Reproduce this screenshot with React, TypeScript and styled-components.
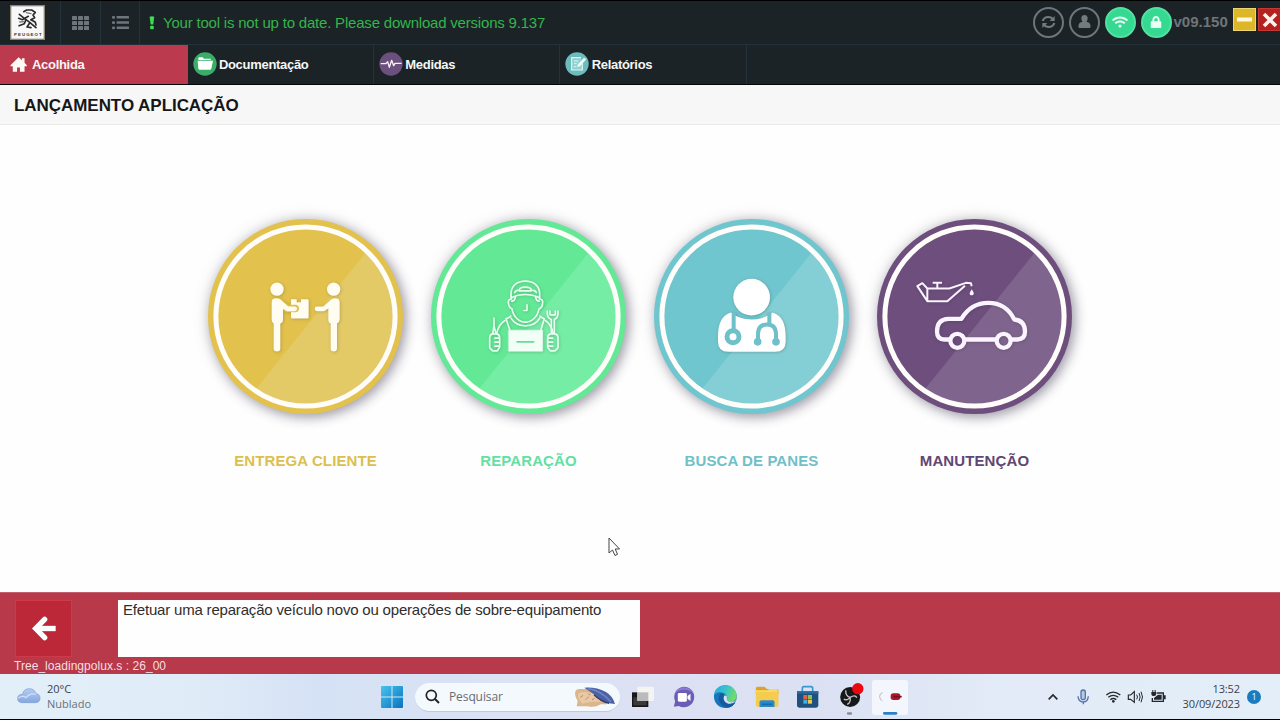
import React from "react";
import styled, { createGlobalStyle } from "styled-components";
import { FaWifi, FaLock } from "react-icons/fa";

const sans = `"Liberation Sans", Arial, sans-serif`;
const system = `"Open Sans", "Noto Sans", sans-serif`;

const GlobalStyle = createGlobalStyle`
  * { box-sizing: border-box; }
  html, body { margin: 0; padding: 0; background: #fefefe; }
  body { overflow: hidden; font-family: ${sans}; }
  svg { display: block; flex: none; }
`;

const Screen = styled.div`
  position: relative;
  display: flex;
  flex-direction: column;
  width: 1280px;
  height: 720px;
  background: #fefefe;
  white-space: nowrap;
`;

/* ---------- header ---------- */

const TopBar = styled.header`
  display: flex;
  align-items: stretch;
  height: 45px;
  background: #1b2326;
  border-top: 1px solid #000;
  border-bottom: 1px solid #22323a;
`;

const TopCell = styled.div<{ $width: number }>`
  display: flex;
  align-items: center;
  justify-content: center;
  width: ${(p) => p.$width}px;
  border-right: 1px solid #22323a;
`;

const LogoSlot = styled.div`
  display: flex;
  margin-right: 6px;
`;

const Notice = styled.div`
  display: flex;
  align-items: center;
  flex: 1;
  padding: 0 0 0 9px;
  gap: 8px;
  color: #33b54c;
  font-size: 15px;
  letter-spacing: -0.2px;
`;

const StatusGroup = styled.div`
  display: flex;
  align-items: flex-start;
  padding-top: 5.5px;
  gap: 4.7px;
`;

const StatusDot = styled.div<{ $active?: boolean }>`
  display: flex;
  align-items: center;
  justify-content: center;
  width: 31px;
  height: 31px;
  border-radius: 50%;
  border: 2px solid ${(p) => (p.$active ? "#4fe3a2" : "#6f757a")};
  background: ${(p) => (p.$active ? "#35d992" : "transparent")};
  color: ${(p) => (p.$active ? "#e9fff5" : "#747a80")};
`;

const Version = styled.div`
  margin: 12px 5px 0 2px;
  width: 54.5px;
  color: #6f757a;
  font-size: 15px;
  line-height: 17px;
  font-weight: bold;
`;

const WindowButton = styled.button<{ $color: string; $edge: string }>`
  display: flex;
  align-items: center;
  justify-content: center;
  width: 23px;
  height: 23px;
  margin: 7px 2px 0 0;
  padding: 0;
  border: 1px solid ${(p) => p.$edge};
  background: ${(p) => p.$color};
  &:last-child { margin-right: -1px; }
`;

const Tabs = styled.nav`
  display: flex;
  height: 40px;
  background: #1b2326;
  border-bottom: 1px solid #050708;
`;

const Tab = styled.a<{ $active?: boolean }>`
  display: flex;
  align-items: center;
  width: ${(p) => (p.$active ? 187.5 : 186.4)}px;
  padding: 0 0 1px ${(p) => (p.$active ? 10 : 5)}px;
  gap: ${(p) => (p.$active ? 5 : 2.4)}px;
  border-right: 1px solid ${(p) => (p.$active ? "#bb3a4d" : "#22323a")};
  background: ${(p) => (p.$active ? "#bb3a4d" : "transparent")};
  color: #f6f6f6;
  font-size: 13px;
  font-weight: bold;
  letter-spacing: -0.3px;
`;

const TitleBar = styled.h1`
  display: flex;
  align-items: center;
  height: 40px;
  margin: 0;
  padding: 2px 0 0 14px;
  background: #f7f7f7;
  border-bottom: 1px solid #e9e9e9;
  color: #161616;
  font-size: 17px;
  font-weight: bold;
  letter-spacing: -0.05px;
`;

/* ---------- main choices ---------- */

const Main = styled.main`
  display: flex;
  justify-content: center;
  gap: 28px;
  flex: 1;
  padding-top: 94px;
`;

const Choice = styled.div<{ $color: string }>`
  display: flex;
  flex-direction: column;
  align-items: center;
  width: 195px;
  gap: 38px;
  color: ${(p) => p.$color};
  font-size: 15px;
  line-height: 18px;
  font-weight: bold;
  letter-spacing: 0.1px;
`;

const Disc = styled.div<{ $color: string }>`
  width: 195px;
  height: 195px;
  border-radius: 50%;
  background: ${(p) => p.$color};
  box-shadow: 3px 3px 12px rgba(50, 40, 70, 0.4), 0 0 16px rgba(90, 90, 100, 0.2);
`;

const Glyph = styled.svg`
  overflow: visible;
  filter: drop-shadow(2px 2px 5px rgba(40, 40, 40, 0.25));
`;

/* ---------- footer ---------- */

const Footer = styled.footer`
  display: grid;
  grid-template-columns: 104px 1fr;
  grid-template-rows: 57px 1fr;
  height: 82px;
  padding: 7px 0 0 14px;
  background: #b83949;
  border-top: 1px solid #c4606d;
`;

const BackButton = styled.button`
  display: flex;
  align-items: center;
  justify-content: center;
  width: 57px;
  height: 57px;
  padding: 0;
  margin-left: 1px;
  border: 1px solid #cf3a48;
  background: #bd2838;
`;

const Message = styled.div`
  width: 522px;
  height: 57px;
  padding: 1px 5px;
  background: #fffefe;
  color: #2e2e2e;
  font-size: 15px;
  line-height: 18px;
  letter-spacing: -0.19px;
`;

const ScriptName = styled.div`
  grid-column: 1 / 3;
  padding-top: 2px;
  color: #f6dfe1;
  font-size: 12px;
  line-height: 15px;
  letter-spacing: 0.04px;
`;

/* ---------- taskbar ---------- */

const Taskbar = styled.div`
  display: flex;
  align-items: center;
  height: 46px;
  background: linear-gradient(90deg, #e3eff8 0, #dfebf7 200px, #d5e2f5 320px, #dbe2f4 520px, #dbe1f3 820px, #e2ebf7 1000px, #e3eef8 100%);
  border-bottom: 1px solid #000;
  font-family: ${system};
  color: #3b4148;
`;

const Weather = styled.div`
  display: flex;
  align-items: center;
  gap: 6px;
  width: 380.5px;
  padding: 0 0 2px 17px;
  font-size: 11px;
  line-height: 15px;
`;

const Muted = styled.div`
  color: #6a7179;
`;

const SearchBox = styled.div`
  display: flex;
  align-items: center;
  width: 204.5px;
  height: 29px;
  margin: 1px 1.5px 0 12.5px;
  padding: 0 4px 0 10px;
  border-radius: 15px;
  background: #f4f9fd;
  border-bottom: 1px solid #c3c9d6;
  font-size: 12px;
  letter-spacing: -0.1px;
  color: #666c73;
  gap: 9px;
`;

const SearchText = styled.span`
  flex: 1;
`;

const Tray = styled.div`
  display: flex;
  align-items: center;
  margin-left: auto;
  padding-right: 19px;
`;

const Clock = styled.div`
  width: 72px;
  padding: 0 1px 1px 0;
  margin-right: 6px;
  text-align: right;
  font-size: 11px;
  line-height: 15px;
  letter-spacing: -0.1px;
`;

const Count = styled.div`
  width: 14px;
  height: 14px;
  border-radius: 50%;
  background: #1a7cc0;
  color: #fff;
  font-size: 9px;
  line-height: 14px;
  text-align: center;
`;

const Pointer = styled.svg`
  position: absolute;
  left: 608px;
  top: 537px;
`;

/* ---------- drawings ---------- */

const Logo = () => (
  <svg width="35" height="35" viewBox="29 14 105 105">
    <rect x="31" y="16" width="101" height="101" fill="#f8f8f8" stroke="#8a8474" strokeWidth="4" />
    <g fill="none" stroke="#2b2b2b" strokeWidth="5" strokeLinecap="round" strokeLinejoin="round">
      <path d="M70 34 L79 29 L94 29 L105 36 L98 44 L103 52 L92 58" />
      <path d="M57 42 L72 54 L88 66 L107 82" />
      <path d="M84 48 L66 58 L55 54 M92 58 L105 66 L107 74 M76 60 L72 70 L56 76 M88 68 L80 80 L92 82" />
      <path d="M78 37 L92 40 M58 65 L70 64" strokeWidth="4" stroke="#777" />
    </g>
    <text x="41" y="107" fontFamily="Liberation Sans, sans-serif" fontSize="13" fontWeight="bold" fill="#333" textLength="83">
      PEUGEOT
    </text>
  </svg>
);

const GridIcon = () => (
  <svg width="17" height="14" viewBox="0 0 17 14" fill="#6e757b">
    {[0, 5, 10].map((y) => [0, 6, 12].map((x) => <rect key={`${x}-${y}`} x={x} y={y} width="5" height="4" rx=".6" />))}
  </svg>
);

const ListIcon = () => (
  <svg width="17" height="14" viewBox="0 0 17 14" fill="#6e757b">
    {[0, 5.2, 10.4].map((y) => (
      <g key={y}>
        <rect y={y} width="3" height="2.8" rx="1" />
        <rect x="4.6" y={y} width="12.4" height="2.6" rx=".4" />
      </g>
    ))}
  </svg>
);

const AlertMark = () => (
  <svg width="6" height="14" viewBox="0 0 6 14" fill="#3edb55">
    <path d="M.6.8Q3-.4 5.2.8L4.3 8.4H1.7Z" />
    <rect x="1.1" y="9.8" width="3.7" height="3.4" rx="1" />
  </svg>
);

const HomeIcon = () => (
  <svg width="17" height="15" viewBox="29 168 51 46" fill="#fffaf5">
    <path d="M55 169 L65 178 V172 H73 V186 L80 193 V196 H73 V213 H59 V200 H50 V213 H37 V196 H30 V193Z" />
  </svg>
);

const SyncIcon = () => (
  <svg width="15" height="14" viewBox="0 0 45 42" fill="none" stroke="currentColor" strokeWidth="6.5">
    <path d="M5 18 Q9 6 22 6 Q30 6 36 12 M40 24 Q36 36 23 36 Q15 36 9 30" />
    <path d="M41 3 V18 H26Z M4 39 V24 H19Z" fill="currentColor" stroke="none" />
  </svg>
);

const PersonIcon = () => (
  <svg width="13" height="14" viewBox="0 0 13 14" fill="currentColor">
    <path d="M6.5 0C8.6 0 9.8 1.5 9.7 3.6C9.6 5.2 8.9 6.3 8.4 6.8C10.8 7 12.6 8.4 12.6 11.4Q12.6 13 11.2 13H1.8Q.4 13 .4 11.4C.4 8.4 2.2 7 4.6 6.8C4.1 6.3 3.4 5.2 3.3 3.6C3.2 1.5 4.4 0 6.5 0Z" />
  </svg>
);

const FolderTabIcon = () => (
  <svg width="24" height="24" viewBox="0 0 72 72">
    <circle cx="36" cy="36" r="35" fill="#3aae68" />
    <path d="M16 19 Q16 16 19 16 H29 L33 20 H53 V24 H16Z M14 26 H60 L55 50 Q54 53 51 53 H20 Q17 53 16 50Z" fill="#fff" />
  </svg>
);

const PulseTabIcon = () => (
  <svg width="24" height="24" viewBox="0 0 72 72">
    <circle cx="36" cy="36" r="35" fill="#6b4f7c" />
    <path d="M5 35 H20 L26 29 L31 46 L38 25 L44 41 L48 34 H68" fill="none" stroke="#f6effa" strokeWidth="4" strokeLinejoin="round" />
  </svg>
);

const NoteTabIcon = () => (
  <svg width="24" height="24" viewBox="0 0 72 72">
    <circle cx="36" cy="36" r="35" fill="#6cbcbd" />
    <path d="M48 17 H20 V54 H52 V34" fill="#8fd0d1" stroke="#dff6f5" strokeWidth="3.5" />
    <path d="M27 27 H40 M27 35 H35 M27 44 H34" stroke="#dff6f5" strokeWidth="3" />
    <path d="M36 46 L39 37 L57 17 L64 22 L45 43Z" fill="#e9fbfa" />
  </svg>
);

const Handover = () => (
  <g fill="#fffdf2">
    <circle cx="246" cy="254" r="20" />
    <circle cx="416" cy="254" r="20" />
    <path d="M288 284 H305 V293 H318 V284 H337 Q341 284 341 288 V338 Q341 342 337 342 H292 Q288 342 288 338Z" />
    <path d="M252 292 L276 312 H301" fill="none" stroke="#e2c04a" strokeWidth="22" strokeLinecap="round" />
    <path d="M230 293 Q230 281 243 281 Q256 281 263 291 L280 306 H299 Q306 306 306 313 Q306 320 299 320 H276 L264 313 V345 Q264 355 256 357 V432 Q256 441 246 441 Q236 441 236 432 V357 Q230 354 230 345Z" />
    <path d="M434 293 Q434 281 421 281 Q409 281 402 291 L385 306 H366 Q359 306 359 313 Q359 320 366 320 H387 L400 312 V345 Q400 355 407 357 V432 Q407 441 416 441 Q426 441 426 432 V357 Q434 354 434 345Z" />
  </g>
);

const Mechanic = () => (
  <g fill="none" stroke="#e6fff0" strokeWidth="5" strokeLinecap="round" strokeLinejoin="round">
    <path d="M273 280 V268 C273 245 290 230 316 230 C342 230 359 245 359 268 V280 Q338 270 316 270 Q294 270 273 280Z" />
    <path d="M284 264 Q287 257 298 257 Q299 248 316 248 Q333 248 334 257 Q346 257 349 264" />
    <path d="M298 259 H334" />
    <path d="M275 283 Q264 284 265 295 Q267 310 276 313 C280 337 298 353 316 353 C335 353 353 337 357 313 Q367 310 368 295 Q369 284 358 283 M275 290 Q283 291 286 279 M358 290 Q350 291 347 279" />
    <path d="M321 301 V318 H312" />
    <path d="M258 343 L270 378 M258 343 Q266 341 272 335 M373 343 L362 378 M373 343 Q366 341 360 335 M273 341 Q287 364 316 364 Q346 364 359 341" />
    <path d="M255 348 Q236 359 230 387 M376 348 Q392 358 400 387" />
    <path d="M266 377 H368 V440 H266Z" fill="#f1fff6" strokeWidth="2" />
    <path d="M291 412 H341" stroke="#66dd94" />
    <path d="M222 341 V364 M218 388 L222 364 L228 388 M209 401 Q209 388 220 388 H228 Q239 388 239 401 V428 L232 439 H218 L209 430Z M225 401 H236 M225 413 H236 M225 425 H236" />
    <path d="M382 320 V329 Q383 341 394 345 V387 M414 320 V329 Q413 341 403 345 V387 M390 320 V331 H406 V320 M383 401 Q383 388 394 388 H403 Q414 388 414 401 V430 L405 439 H391 L383 428Z M386 401 H398 M386 413 H398 M386 425 H398" />
  </g>
);

const Doctor = () => (
  <g fill="#fff">
    <path d="M267 324 Q293 345 329 345 Q366 345 391 324 C419 332 431 356 431 397 V411 Q431 442 400 442 H259 Q228 442 228 411 V397 C228 356 240 332 267 324Z" />
    <circle cx="329" cy="278" r="55" />
    <g fill="none" stroke="#6fc0c9" strokeWidth="12">
      <path d="M275 324 V378 M382 324 V358" />
      <circle cx="273" cy="397" r="18" strokeWidth="15" />
      <path d="M348 409 V387 Q349 360 375 360 Q401 360 402 387 V409" />
    </g>
    <g fill="#6fc0c9">
      <circle cx="347" cy="412" r="11.5" />
      <circle cx="402" cy="412" r="11.5" />
    </g>
  </g>
);

const CarService = () => (
  <g fill="none" stroke="#fbf3ff">
    <g strokeWidth="13">
      <path d="M252 405 H238 Q216 405 216 381 C216 355 228 344 250 343 H289 C307 313 335 295 370 295 C408 295 434 317 448 345 C470 347 480 360 480 382 Q480 404 458 405 H440 M300 405 H394" strokeLinejoin="round" />
      <circle cx="277" cy="409" r="21" />
      <circle cx="416" cy="409" r="21" />
    </g>
    <g strokeWidth="6" strokeLinejoin="round">
      <path d="M187 252 L172 236 L157 245 L187 290 H247 L300 244 M187 290 V252 H253 L303 235 L318 236 L320 245 M203 235 H231 M217 235 V250" />
    </g>
    <path d="M320 254 Q328 265 326 269 Q320 276 314 269 Q313 265 320 254Z" fill="#fbf3ff" stroke="none" />
  </g>
);

type ChoiceData = {
  id: string;
  label: string;
  color: string;
  tint: string;
  text: string;
  originX: number;
  art: React.ReactNode;
};

const choices: ChoiceData[] = [
  { id: "delivery", label: "ENTREGA CLIENTE", color: "#e2c14c", tint: "#e4ca66", text: "#dcbf4e", originX: 39, art: <Handover /> },
  { id: "repair", label: "REPARAÇÃO", color: "#63e996", tint: "#75eda5", text: "#66dfa2", originX: 33, art: <Mechanic /> },
  { id: "diagnosis", label: "BUSCA DE PANES", color: "#70c6ce", tint: "#84cfd5", text: "#70c0c8", originX: 36, art: <Doctor /> },
  { id: "service", label: "MANUTENÇÃO", color: "#6d4e7d", tint: "#7f648d", text: "#614673", originX: 36, art: <CarService /> },
];

const ChoiceItem = ({ item }: { item: ChoiceData }) => (
  <Choice $color={item.text}>
    <Disc $color={item.color}>
      <svg width="195" height="195" viewBox="0 0 195 195">
        <clipPath id={`clip-${item.id}`}>
          <circle cx="97.5" cy="97.5" r="90" />
        </clipPath>
        <path d="M167 22 L40 180 L195 195 V22Z" fill={item.tint} clipPath={`url(#clip-${item.id})`} />
        <circle cx="97.5" cy="97.5" r="89.6" fill="none" stroke="#fffdfa" strokeWidth="5" />
        <Glyph width="195" height="195" viewBox={`${item.originX} 43.5 585 585`}>
          {item.art}
        </Glyph>
      </svg>
    </Disc>
    {item.label}
  </Choice>
);

const CloudIcon = () => (
  <svg width="24" height="16" viewBox="52 306 72 48">
    <defs>
      <linearGradient id="cloud" x1="0" y1="0" x2="0" y2="1">
        <stop offset="0" stopColor="#b4cdf3" />
        <stop offset="1" stopColor="#86a6dc" />
      </linearGradient>
    </defs>
    <path d="M69 350 Q54 350 54 338 Q54 325 68 325 Q72 308 89 308 Q105 308 108 323 Q121 323 121 337 Q121 350 107 350Z" fill="url(#cloud)" stroke="#7d9dd6" strokeWidth="2" />
    <path d="M56 336 Q68 327 79 335 Q92 320 108 325" fill="none" stroke="#cfe0fa" strokeWidth="4" />
  </svg>
);

const StartIcon = () => (
  <svg width="22" height="22" viewBox="0 0 22 22">
    <defs>
      <linearGradient id="win" x1="0" y1="0" x2="1" y2="1">
        <stop offset="0" stopColor="#45c4ee" />
        <stop offset="1" stopColor="#0b72bd" />
      </linearGradient>
    </defs>
    <path d="M1 0H10.5V10.5H0V1Q0 0 1 0ZM11.5 0H21Q22 0 22 1V10.5H11.5ZM0 11.5H10.5V22H1Q0 22 0 21ZM11.5 11.5H22V21Q22 22 21 22H11.5Z" fill="url(#win)" />
  </svg>
);

const MagnifierIcon = () => (
  <svg width="15" height="15" viewBox="0 0 15 15" fill="none" stroke="#202225" strokeWidth="1.7">
    <circle cx="6.3" cy="6.3" r="5" />
    <path d="M10 10L14 14" strokeWidth="2" />
  </svg>
);

const BreadIcon = () => (
  <svg width="42" height="22" viewBox="637 46 126 66">
    <path d="M641 62 Q645 53 658 55 L702 56 Q721 61 729 76 L735 101 L717 101 Q700 112 678 107 L645 107 L648 91 Q638 76 641 62Z" fill="#dcb58b" />
    <path d="M650 68 Q672 58 699 72 Q717 80 714 94 Q690 91 662 99 Q645 84 650 68Z" fill="#e9c9a5" />
    <path d="M656 80 L664 74 M672 87 L681 78 M691 88 L699 82 M680 70 L686 73" stroke="#b98a5e" strokeWidth="3" />
    <path d="M668 51 Q702 48 733 64 Q754 77 760 100 L742 98 Q716 91 697 71Z" fill="#4a62a5" />
    <path d="M678 54 Q715 58 748 93" stroke="#6a82c2" strokeWidth="5" fill="none" />
    <path d="M697 72 Q716 91 742 98" stroke="#2d3c68" strokeWidth="4" fill="none" />
  </svg>
);

const TaskViewArt = () => (
  <>
    <rect x="36" y="67" width="49" height="44" fill="#181818" />
    <rect x="40" y="82" width="40" height="24" fill="#3a3a3a" />
    <rect x="52" y="50" width="50" height="43" rx="3" fill="#f4f4f3" />
    <path d="M52 67 H85 V93 H52Z" fill="#bbb" />
  </>
);

const ChatArt = () => (
  <>
    <path d="M190 50 A31 31 0 1 1 175 108 L160 110 L164 94 A31 31 0 0 1 190 50Z" fill="#6a5cb8" />
    <path d="M162 72 A31 31 0 0 1 220 72 A40 40 0 0 0 162 72Z" fill="#8a7bd0" />
    <rect x="172" y="69" width="27" height="26" rx="4" fill="#fff" />
    <path d="M201 78 L210 71 V93 L201 86Z" fill="#fff" />
  </>
);

const EdgeArt = () => (
  <>
    <defs>
      <linearGradient id="edgeTop" x1="0" y1="0" x2="1" y2=".3">
        <stop offset="0" stopColor="#2ba9df" />
        <stop offset=".55" stopColor="#38c3cc" />
        <stop offset="1" stopColor="#70db6b" />
      </linearGradient>
    </defs>
    <circle cx="316" cy="80" r="34" fill="#1874bd" />
    <path d="M282 76 C283 57 298 46 316 46 C336 46 350 61 350 77 C350 92 338 99 326 96 C314 94 324 88 321 80 C315 65 291 62 282 76Z" fill="url(#edgeTop)" />
    <path d="M300 72 C291 91 302 110 322 113 C333 112 341 106 346 98 C334 104 319 103 312 94 C308 87 309 80 314 76 C311 71 306 69 300 72Z" fill="#135a9f" />
    <path d="M314 76 C307 86 314 99 326 101 C337 102 347 96 350 87 C348 94 335 99 326 95 C318 92 322 85 320 79Z" fill="#d9e2f3" />
  </>
);

const FolderArt = () => (
  <>
    <path d="M406 55 Q406 50 411 50 H432 L439 57 H469 Q474 57 474 62 V73 H406Z" fill="#dba22e" />
    <rect x="406" y="60" width="68" height="50" rx="4" fill="#f6cc4f" />
    <path d="M406 62 H440 L446 57 H470 V66 H406Z" fill="#f9d768" />
    <path d="M417 111 V97 Q417 91 423 91 H456 Q462 91 462 97 V111Z" fill="#2c89c9" />
    <path d="M424 103 H455" stroke="#1769a7" strokeWidth="5" />
  </>
);

const StoreArt = () => (
  <>
    <path d="M547 65 V55 Q547 50 552 50 H573 Q578 50 578 55 V65" fill="none" stroke="#3898d0" strokeWidth="5" />
    <path d="M531 64 H595 V106 Q595 113 588 113 H538 Q531 113 531 106Z" fill="#20517e" />
    <path d="M531 64 H595 V71 H531Z" fill="#286b9e" />
    <rect x="550" y="75" width="12" height="12" fill="#ea6045" />
    <rect x="564" y="75" width="12" height="12" fill="#8cc44f" />
    <rect x="550" y="89" width="12" height="12" fill="#43aee8" />
    <rect x="564" y="89" width="12" height="12" fill="#f2c64b" />
  </>
);

const RecorderArt = () => (
  <>
    <circle cx="689" cy="81" r="30" fill="#17181a" />
    <path d="M676 61 Q674 78 689 82 Q704 73 709 83 M689 82 Q691 99 680 103 M670 87 Q678 94 689 82" fill="none" stroke="#c9c9c9" strokeWidth="4" />
    <circle cx="712" cy="56" r="17" fill="#e90710" />
    <rect x="679" y="127" width="16" height="7" rx="3.5" fill="#888d95" />
  </>
);

const ActiveArt = () => (
  <>
    <rect x="756" y="30" width="108" height="105" rx="9" fill="#f3f6fc" />
    <path d="M788 68 Q778 70 779 80 Q780 91 787 92" fill="none" stroke="#b9bdc0" strokeWidth="3" />
    <rect x="812" y="70" width="29" height="20" rx="8" fill="#a81828" />
    <path d="M820 80 H845" stroke="#7a0d1b" strokeWidth="5" />
    <rect x="789" y="126" width="43" height="8" rx="4" fill="#2c7fc4" />
  </>
);

const taskArt = [TaskViewArt, ChatArt, EdgeArt, FolderArt, StoreArt, RecorderArt, ActiveArt];

const TrayIcons = () => (
  <svg width="124" height="45" viewBox="45 12 372 135" fill="none" stroke="#24282c" strokeWidth="4">
    <path d="M56 88 L69 75 L82 88" strokeWidth="5" />
    <g stroke="#5474ad">
      <rect x="153" y="60" width="13" height="29" rx="6.5" fill="#b7c9e6" />
      <path d="M144 79 Q145 96 160 96 Q174 96 175 79 M160 96 V103" />
    </g>
    <path d="M229 75 Q249 58 271 75 M235 82 Q249 70 265 82 M241 89 Q249 82 259 89" />
    <circle cx="250" cy="94" r="4" fill="#24282c" stroke="none" />
    <path d="M295 75 H302 L313 65 V97 L302 88 H295Z" strokeWidth="3.5" />
    <path d="M320 74 Q325 81 320 88 M327 69 Q334 81 327 93 M333 65 Q342 81 333 97" strokeWidth="3" />
    <path d="M381 69 H400 V94 H367 V84" />
    <path d="M372 84 L384 74 H395 V89 H372Z M402 76 H407 V88 H402Z" fill="#24282c" stroke="none" />
    <path d="M364 66 H379 V71 Q379 78 372 78 Q364 78 364 71Z M367 60 H370 V67 H367Z M374 60 H377 V67 H374Z" fill="#24282c" stroke="none" />
  </svg>
);

export default function App() {
  return (
    <Screen>
      <GlobalStyle />
      <TopBar>
        <TopCell $width={61}>
          <LogoSlot>
            <Logo />
          </LogoSlot>
        </TopCell>
        <TopCell $width={40}>
          <GridIcon />
        </TopCell>
        <TopCell $width={39}>
          <ListIcon />
        </TopCell>
        <Notice>
          <AlertMark />
          Your tool is not up to date. Please download versions 9.137
        </Notice>
        <StatusGroup>
          <StatusDot><SyncIcon /></StatusDot>
          <StatusDot><PersonIcon /></StatusDot>
          <StatusDot $active><FaWifi size={16} /></StatusDot>
          <StatusDot $active><FaLock size={12} /></StatusDot>
        </StatusGroup>
        <Version>v09.150</Version>
        <WindowButton $color="#ddb629" $edge="#ecd774">
          <svg width="15" height="5" viewBox="0 0 15 5"><rect y=".5" width="15" height="4" fill="#fff8dc" /></svg>
        </WindowButton>
        <WindowButton $color="#b5211f" $edge="#c53732">
          <svg width="16" height="16" viewBox="0 0 16 16"><path d="M2 2L14 14M14 2L2 14" stroke="#fff2ea" strokeWidth="3.6" /></svg>
        </WindowButton>
      </TopBar>
      <Tabs>
        <Tab $active><HomeIcon />Acolhida</Tab>
        <Tab><FolderTabIcon />Documentação</Tab>
        <Tab><PulseTabIcon />Medidas</Tab>
        <Tab><NoteTabIcon />Relatórios</Tab>
      </Tabs>
      <TitleBar>LANÇAMENTO APLICAÇÃO</TitleBar>
      <Main>
        {choices.map((item) => (
          <ChoiceItem key={item.id} item={item} />
        ))}
      </Main>
      <Footer>
        <BackButton>
          <svg width="24" height="25" viewBox="94 94 72 75" fill="none" stroke="#fff" strokeWidth="16" strokeLinecap="round">
            <path d="M132 104 L105 131.5 L132 159" />
            <path d="M110 131.5 H165" strokeLinecap="butt" />
          </svg>
        </BackButton>
        <Message>Efetuar uma reparação veículo novo ou operações de sobre-equipamento</Message>
        <ScriptName>Tree_loadingpolux.s : 26_00</ScriptName>
      </Footer>
      <Taskbar>
        <Weather>
          <CloudIcon />
          <div>
            <div>20°C</div>
            <Muted>Nublado</Muted>
          </div>
        </Weather>
        <StartIcon />
        <SearchBox>
          <MagnifierIcon />
          <SearchText>Pesquisar</SearchText>
          <BreadIcon />
        </SearchBox>
        {taskArt.map((Art, i) => (
          <svg key={i} width="41.5" height="45" viewBox={`${3 + 124.5 * i} 12 124.5 135`}>
            <Art />
          </svg>
        ))}
        <Tray>
          <TrayIcons />
          <Clock>
            <div>13:52</div>
            <div>30/09/2023</div>
          </Clock>
          <Count>1</Count>
        </Tray>
      </Taskbar>
      <Pointer width="13" height="20" viewBox="0 0 13 20">
        <path d="M1 1V16L4.5 13L7 18.5L9.5 17.3L7.2 12H11.5Z" fill="#fff" stroke="#444" strokeWidth="1" />
      </Pointer>
    </Screen>
  );
}
